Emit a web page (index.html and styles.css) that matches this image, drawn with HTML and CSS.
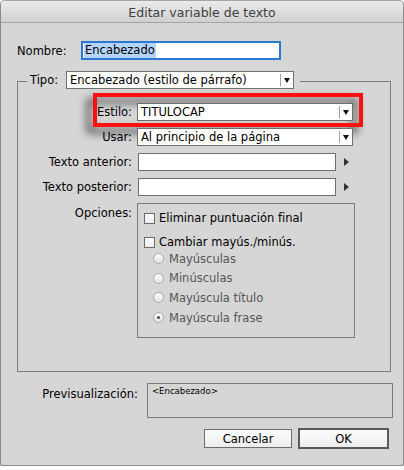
FILE: index.html
```html
<!DOCTYPE html>
<html lang="es">
<head>
<meta charset="utf-8">
<title>Editar variable de texto</title>
<link rel="stylesheet" href="styles.css">
</head>
<body>
<div class="window">
  <div class="titlebar">Editar variable de texto</div>
  <div class="content">
    <div class="name-row">
      <span class="name-label">Nombre:</span>
      <div class="name-input"><span class="selection">Encabezado</span></div>
    </div>

    <fieldset class="group">
      <legend class="legend">
        <span class="legend-label">Tipo:</span>
        <div class="select select-tipo"><span class="select-text">Encabezado (estilo de párrafo)</span><span class="drop"><i class="tri"></i></span></div>
      </legend>

      <div class="rows">
        <div class="row row-estilo">
          <span class="row-label">Estilo:</span>
          <div class="select select-wide"><span class="select-text">TITULOCAP</span><span class="drop"><i class="tri"></i></span></div>
          <div class="highlight"></div>
        </div>
        <div class="row">
          <span class="row-label">Usar:</span>
          <div class="select select-wide"><span class="select-text">Al principio de la página</span><span class="drop"><i class="tri"></i></span></div>
        </div>
        <div class="row">
          <span class="row-label">Texto anterior:</span>
          <div class="text-input"></div>
          <i class="tri-right"></i>
        </div>
        <div class="row">
          <span class="row-label">Texto posterior:</span>
          <div class="text-input"></div>
          <i class="tri-right"></i>
        </div>
        <div class="row row-options">
          <span class="row-label options-label">Opciones:</span>
          <div class="options-box">
            <div class="check-row check-first"><i class="checkbox"></i><span>Eliminar puntuación final</span></div>
            <div class="check-row check-second"><i class="checkbox"></i><span>Cambiar mayús./minús.</span></div>
            <div class="radios">
              <div class="radio-row"><i class="radio"></i><span>Mayúsculas</span></div>
              <div class="radio-row"><i class="radio"></i><span>Minúsculas</span></div>
              <div class="radio-row"><i class="radio"></i><span>Mayúscula título</span></div>
              <div class="radio-row"><i class="radio radio-on"></i><span>Mayúscula frase</span></div>
            </div>
          </div>
        </div>
      </div>
    </fieldset>

    <div class="preview-row">
      <span class="preview-label">Previsualización:</span>
      <div class="preview-box">&lt;Encabezado&gt;</div>
    </div>

    <div class="buttons">
      <div class="button button-cancel">Cancelar</div>
      <div class="button button-ok">OK</div>
    </div>
  </div>
</div>
</body>
</html>
```

FILE: styles.css
```css
html, body {
  margin: 0;
  padding: 0;
  background: #ffffff;
}

.window {
  width: 404px;
  height: 466px;
  box-sizing: border-box;
  border: 1px solid #8c8c8c;
  border-top-color: #a6a6a6;
  border-radius: 5px 5px 3px 3px;
  background: #d6d6d6;
  box-shadow: 0 2px 4px rgba(0, 0, 0, 0.45);
  overflow: hidden;
  font-family: "DejaVu Sans", "Noto Sans", sans-serif;
  font-size: 11.5px;
  color: #000;
}

.titlebar {
  height: 21px;
  border-bottom: 1px solid #a4a4a4;
  background: linear-gradient(#ebebeb, #d0d0d0);
  text-align: center;
  line-height: 23px;
  font-size: 12.5px;
  color: #404040;
}

.content {
  padding: 18px 0 0 16px;
}

/* Nombre */
.name-row {
  display: flex;
  align-items: center;
  height: 19px;
}

.name-label {
  width: 64px;
}

.name-input {
  width: 200px;
  height: 19px;
  box-sizing: border-box;
  border: 2px solid #2a7ad3;
  background: #fff;
  padding-left: 1px;
  display: flex;
  align-items: center;
}

.selection {
  background: #b5d4fb;
  padding: 0 1px;
  line-height: 15px;
}

/* Group */
.group {
  margin: 11px 0 0 0;
  padding: 11px 0 33px 0;
  width: 374px;
  box-sizing: border-box;
  border: 1px solid #7a7a7a;
  min-width: 0;
}

.legend {
  margin-left: 9px;
  padding: 0 6px 3px 3px;
  display: flex;
  align-items: center;
}

.legend-label {
  width: 36px;
}

.select {
  height: 18px;
  box-sizing: border-box;
  border: 1px solid #6f6f6f;
  background: #fff;
  display: flex;
  align-items: center;
  position: relative;
  z-index: 1;
}

.select-text {
  flex: 1;
  padding-left: 3px;
  white-space: nowrap;
  overflow: hidden;
}

.select-tipo {
  width: 228px;
}

.select-wide {
  width: 216px;
}

.drop {
  width: 12px;
  height: 12px;
  border-left: 1px solid #a3a3a3;
  display: flex;
  align-items: center;
  justify-content: center;
}

.tri {
  width: 0;
  height: 0;
  border-left: 3.5px solid transparent;
  border-right: 3.5px solid transparent;
  border-top: 5px solid #111;
}

.rows {
  display: flex;
  flex-direction: column;
  gap: 7px;
}

.row {
  display: flex;
  align-items: center;
  height: 18px;
}

.row-label {
  width: 114px;
  margin-right: 5px;
  text-align: right;
  white-space: nowrap;
}

.row-estilo {
  position: relative;
}

.highlight {
  position: absolute;
  left: 75px;
  top: -10px;
  width: 270px;
  height: 34px;
  box-sizing: border-box;
  border: 4px solid #ff1010;
  filter: drop-shadow(-6px 6px 4px rgba(0, 0, 0, 0.75));
  z-index: 0;
}

.text-input {
  width: 198px;
  height: 18px;
  margin-left: 1px;
  box-sizing: border-box;
  border: 1px solid #6f6f6f;
  background: #fff;
}

.tri-right {
  margin-left: 8px;
  width: 0;
  height: 0;
  border-top: 4px solid transparent;
  border-bottom: 4px solid transparent;
  border-left: 5px solid #333;
}

/* Opciones */
.row-options {
  height: auto;
  align-items: flex-start;
}

.options-label {
  padding-top: 3px;
}

.options-box {
  width: 218px;
  height: 135px;
  box-sizing: border-box;
  border: 1px solid #7a7a7a;
  padding: 5px 0 0 6px;
}

.check-row {
  display: flex;
  align-items: center;
  gap: 4px;
}

.check-first {
  height: 18px;
}

.check-second {
  height: 16px;
  margin-top: 7px;
}

.checkbox {
  width: 11px;
  height: 11px;
  box-sizing: border-box;
  border: 1px solid #6c6c6c;
  background: linear-gradient(#ffffff, #ececec);
}

.radios {
  margin-top: -1px;
  padding-left: 9px;
}

.radio-row {
  display: flex;
  align-items: center;
  gap: 5px;
  height: 19.6px;
  color: #555;
}

.radio {
  width: 11px;
  height: 11px;
  box-sizing: border-box;
  border: 1px solid #a9a9a9;
  border-radius: 50%;
  background: linear-gradient(#fbfbfb, #e4e4e4);
  display: flex;
  align-items: center;
  justify-content: center;
}

.radio-on::after {
  content: "";
  width: 3px;
  height: 3px;
  border-radius: 50%;
  background: #4a4a4a;
}

/* Preview */
.preview-row {
  display: flex;
  align-items: flex-start;
  margin-top: 11px;
}

.preview-label {
  width: 121px;
  text-align: right;
  padding-top: 4px;
}

.preview-box {
  margin-left: 9px;
  width: 246px;
  height: 35px;
  box-sizing: border-box;
  border: 1px solid #7a7a7a;
  padding: 2px 0 0 4px;
  font-size: 8.5px;
  line-height: 11px;
}

/* Buttons */
.buttons {
  display: flex;
  justify-content: flex-end;
  align-items: center;
  gap: 6px;
  margin-top: 10px;
  padding-right: 14px;
}

.button {
  box-sizing: border-box;
  display: flex;
  align-items: center;
  justify-content: center;
  background: linear-gradient(#fbfbfb, #ededed);
}

.button-cancel {
  width: 88px;
  height: 19px;
  border: 1px solid #6c6c6c;
}

.button-ok {
  width: 91px;
  height: 21px;
  border: 2px solid #5a5a5a;
}
```
